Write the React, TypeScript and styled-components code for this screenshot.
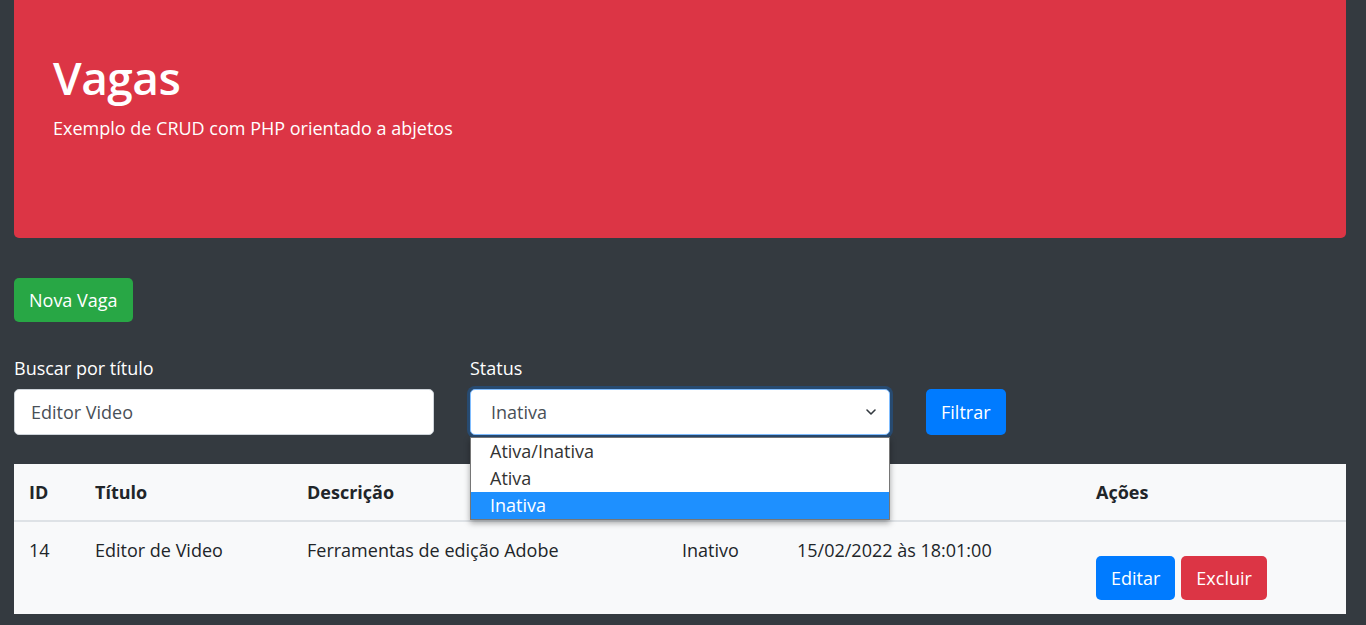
import React from "react";
import styled, { createGlobalStyle } from "styled-components";

const GlobalStyle = createGlobalStyle`
  html, body {
    margin: 0;
    padding: 0;
    background: #343a40;
    font-family: "Open Sans", "Noto Sans", sans-serif;
    color: #ffffff;
  }
  * { box-sizing: border-box; }
`;

const Container = styled.main`
  padding: 0 20px 0 14px;
`;

const Jumbotron = styled.section`
  background: #dc3545;
  border-radius: 0 0 5px 5px;
  height: 238px;
  padding: 50px 39px 0;
`;

const Title = styled.h1`
  margin: 0;
  font-size: 46px;
  font-weight: 600;
  line-height: 1.2;
  letter-spacing: -0.5px;
  color: #ffffff;
`;

const Lead = styled.p`
  margin: 11px 0 0;
  font-size: 18px;
  line-height: 1.4;
`;

const Toolbar = styled.div`
  margin-top: 40px;
`;

const Button = styled.button<{ $variant: "success" | "primary" | "danger" }>`
  font-family: inherit;
  font-size: 18px;
  line-height: 24px;
  color: #ffffff;
  border: 1px solid transparent;
  border-radius: 5px;
  padding: 9px 14px;
  cursor: pointer;
  background: ${(p) =>
    p.$variant === "success" ? "#28a745" : p.$variant === "primary" ? "#007bff" : "#dc3545"};
`;

const FilterForm = styled.form`
  margin-top: 34px;
  display: flex;
  align-items: flex-end;
  gap: 36px;
`;

const Field = styled.div`
  width: 420px;
  display: flex;
  flex-direction: column;
  gap: 9px;
  position: relative;
`;

const Label = styled.label`
  font-size: 18px;
  line-height: 24px;
`;

const TextInput = styled.div`
  height: 46px;
  background: #ffffff;
  border: 1px solid #ced4da;
  border-radius: 5px;
  padding: 0 16px;
  display: flex;
  align-items: center;
  font-size: 18px;
  color: #495057;
`;

const SelectBox = styled(TextInput)`
  padding: 0 12px 0 20px;
  justify-content: space-between;
  border-color: #80bdff;
  box-shadow: 0 0 0 3px rgba(0, 123, 255, 0.25);
`;

const Dropdown = styled.ul`
  position: absolute;
  top: 100%;
  left: 0;
  right: 0;
  margin: 2px 0 0;
  padding: 0;
  list-style: none;
  background: #ffffff;
  border: 1px solid #767676;
  box-shadow: 0 3px 6px rgba(0, 0, 0, 0.35);
  z-index: 5;
`;

const Option = styled.li<{ $selected?: boolean }>`
  height: 27px;
  line-height: 27px;
  padding: 0 19px;
  font-size: 18px;
  color: ${(p) => (p.$selected ? "#ffffff" : "#333333")};
  background: ${(p) => (p.$selected ? "#1e90ff" : "transparent")};
`;

const FilterButton = styled(Button)`
  height: 46px;
`;

const Table = styled.table`
  margin-top: 29px;
  width: 100%;
  border-collapse: collapse;
  background: #f8f9fa;
  color: #212529;
  font-size: 18px;
`;

const Th = styled.th<{ $w?: number }>`
  text-align: left;
  font-weight: 700;
  padding: 16px 15px;
  height: 57px;
  border-bottom: 2px solid #dee2e6;
  width: ${(p) => (p.$w ? `${p.$w}px` : "auto")};
`;

const Td = styled.td`
  padding: 16px 15px 14px;
  vertical-align: top;
  line-height: 24px;
`;

const Actions = styled.div`
  margin-top: 18px;
  display: flex;
  gap: 6px;
`;

const Chevron = () => (
  <svg width="12" height="12" viewBox="0 0 12 12" fill="none">
    <path d="M2 4l4 4 4-4" stroke="#343a40" strokeWidth="1.6" strokeLinecap="round" strokeLinejoin="round" />
  </svg>
);

export default function App() {
  return (
    <>
      <GlobalStyle />
      <Container>
        <Jumbotron>
          <Title>Vagas</Title>
          <Lead>Exemplo de CRUD com PHP orientado a abjetos</Lead>
        </Jumbotron>

        <Toolbar>
          <Button $variant="success">Nova Vaga</Button>
        </Toolbar>

        <FilterForm>
          <Field>
            <Label>Buscar por título</Label>
            <TextInput>Editor Video</TextInput>
          </Field>
          <Field>
            <Label>Status</Label>
            <SelectBox>
              <span>Inativa</span>
              <Chevron />
            </SelectBox>
            <Dropdown>
              <Option>Ativa/Inativa</Option>
              <Option>Ativa</Option>
              <Option $selected>Inativa</Option>
            </Dropdown>
          </Field>
          <FilterButton $variant="primary" type="button">Filtrar</FilterButton>
        </FilterForm>

        <Table>
          <thead>
            <tr>
              <Th $w={66}>ID</Th>
              <Th $w={212}>Título</Th>
              <Th $w={375}>Descrição</Th>
              <Th $w={115}>Status</Th>
              <Th $w={299}>Data</Th>
              <Th>Ações</Th>
            </tr>
          </thead>
          <tbody>
            <tr>
              <Td>14</Td>
              <Td>Editor de Video</Td>
              <Td>Ferramentas de edição Adobe</Td>
              <Td>Inativo</Td>
              <Td>15/02/2022 às 18:01:00</Td>
              <Td>
                <Actions>
                  <Button $variant="primary">Editar</Button>
                  <Button $variant="danger">Excluir</Button>
                </Actions>
              </Td>
            </tr>
          </tbody>
        </Table>
      </Container>
    </>
  );
}
